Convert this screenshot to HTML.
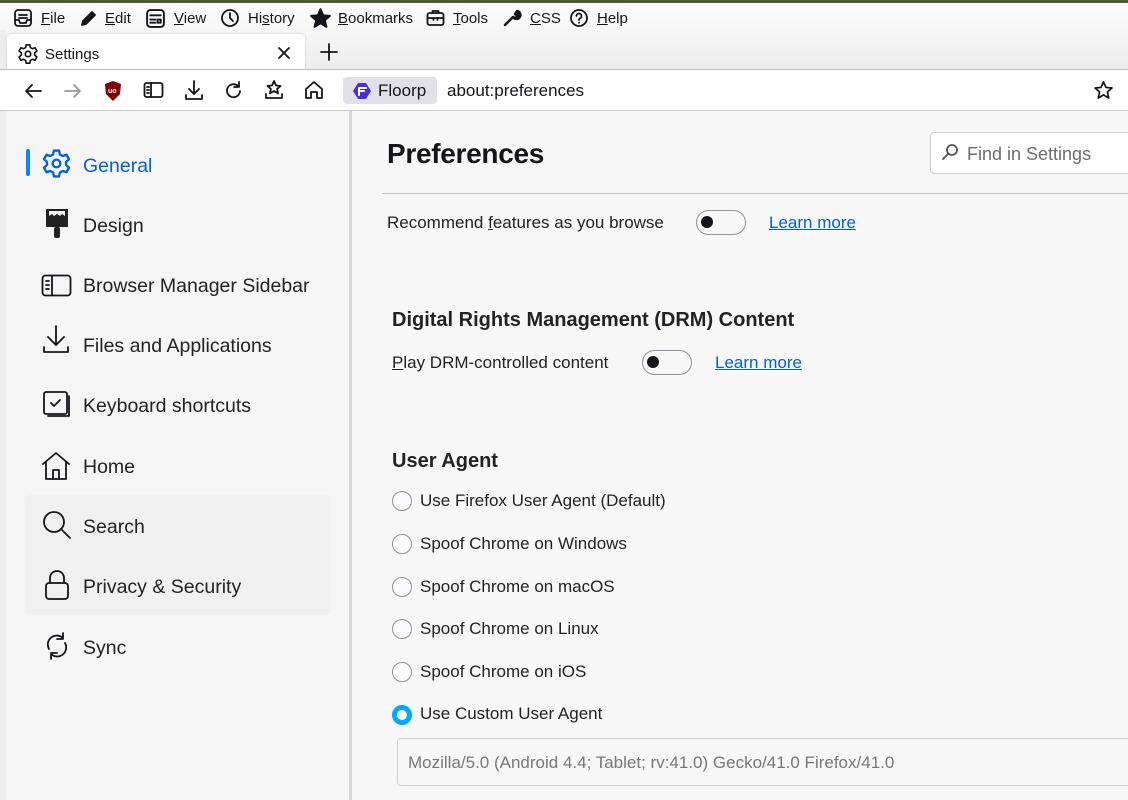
<!DOCTYPE html>
<html><head><meta charset="utf-8"><style>
*{box-sizing:border-box;margin:0;padding:0}
body{width:1128px;height:800px;overflow:hidden;font-family:"Liberation Sans",sans-serif;background:#f7f7f7;position:relative;color:#15141a}
.abs{position:absolute}
svg{position:absolute;fill:none;stroke:#15141a;stroke-width:1.8;stroke-linecap:round;stroke-linejoin:round}
.menu{font-size:15px;top:10px}
.side{position:absolute;left:83px;font-size:19.5px;color:#222}
.t{position:absolute;font-size:17px;color:#222}
.lm{color:#0060df;text-decoration:underline}
.tog{position:absolute;width:50px;height:25px;border:1.5px solid #8f8f9d;border-radius:13px;background:#f7f7f7}
.tog:after{content:"";position:absolute;left:4px;top:5px;width:12px;height:12px;border-radius:50%;background:#15141a}
.rad{position:absolute;left:392px;width:20px;height:20px;border:1.5px solid #8f8f9d;border-radius:50%;background:#fbfbfb}
.rt{position:absolute;left:420px;font-size:17px;color:#222}
</style></head><body>
<div class="abs" style="left:0;top:0;width:1128px;height:3px;background:#4a5a3a"></div>
<div class="abs" style="left:0;top:3px;width:1128px;height:66px;background:linear-gradient(#fdfdfd,#ededed)"></div>
<div class="abs" style="left:0;top:30px;width:6px;height:770px;background:#ededed"></div>
<!-- menu -->
<svg style="left:13px;top:8px" width="20" height="20" viewBox="0 0 20 20"><rect x="2" y="2" width="16" height="16" rx="3"/><path d="M6 7h8M6 10h8M2 12h4l1 3h6l1-3h4"/></svg>
<span class="abs menu" style="left:41px"><u>F</u>ile</span>
<svg style="left:79px;top:8px" width="20" height="20" viewBox="0 0 20 20"><path d="M3 17l1-4 9-9 3 3-9 9z" fill="#15141a"/></svg>
<span class="abs menu" style="left:105px"><u>E</u>dit</span>
<svg style="left:145px;top:8px" width="21" height="21" viewBox="0 0 20 20"><rect x="2" y="2" width="16" height="16" rx="3"/><path d="M5 7h10M5 11h5M5 14h5"/><rect x="12" y="11" width="3" height="3"/></svg>
<span class="abs menu" style="left:174px"><u>V</u>iew</span>
<svg style="left:220px;top:8px" width="20" height="20" viewBox="0 0 20 20"><circle cx="10" cy="10" r="8"/><path d="M10 5v5l3 3"/></svg>
<span class="abs menu" style="left:248px">Hi<u>s</u>tory</span>
<svg style="left:310px;top:8px" width="21" height="21" viewBox="0 0 20 20"><path d="M10 1l2.7 6 6.3.5-4.8 4.2 1.5 6.3L10 14.6 4.3 18l1.5-6.3L1 7.5 7.3 7z" fill="#15141a"/></svg>
<span class="abs menu" style="left:338px"><u>B</u>ookmarks</span>
<svg style="left:425px;top:8px" width="21" height="20" viewBox="0 0 20 20"><rect x="2" y="5" width="16" height="12" rx="2"/><path d="M7 5V3h6v2M2 10h16M8 10v2M12 10v2"/></svg>
<span class="abs menu" style="left:453px"><u>T</u>ools</span>
<svg style="left:502px;top:8px" width="20" height="20" viewBox="0 0 20 20"><path d="M3 17l8-8M11 9a4 4 0 1 0 4-6l-2 3 1 1 3-2a4 4 0 0 1-6 4" stroke-width="2.4"/></svg>
<span class="abs menu" style="left:530px"><u>C</u>SS</span>
<svg style="left:569px;top:8px" width="20" height="20" viewBox="0 0 20 20"><circle cx="10" cy="10" r="8"/><path d="M7.5 8a2.5 2.5 0 1 1 3.5 2.3c-.8.4-1 1-1 1.7M10 14.5v.3"/></svg>
<span class="abs menu" style="left:597px"><u>H</u>elp</span>
<!-- tab -->
<div class="abs" style="left:7px;top:34px;width:298px;height:40px;background:#fff;border-radius:4px 4px 0 0;box-shadow:0 0 2px rgba(0,0,0,.2)"></div>
<svg style="left:17px;top:43px" width="22" height="22" viewBox="0 0 24 24" stroke-width="1.6"><circle cx="12" cy="12" r="3"/><path d="M10 2h4l.6 3 2.2 1.2 2.9-1 2 3.5-2.3 2v2.6l2.3 2-2 3.5-2.9-1L14.6 19 14 22h-4l-.6-3-2.2-1.2-2.9 1-2-3.5 2.3-2v-2.6l-2.3-2 2-3.5 2.9 1L9.4 5z"/></svg>
<span class="abs" style="left:45px;top:46px;font-size:15px">Settings</span>
<svg style="left:277px;top:46px" width="14" height="14" viewBox="0 0 14 14"><path d="M2 2l10 10M12 2L2 12"/></svg>
<svg style="left:320px;top:43px" width="18" height="18" viewBox="0 0 18 18"><path d="M9 1v16M1 9h16"/></svg>
<!-- nav -->
<div class="abs" style="left:0;top:69px;width:1128px;height:42px;background:#fff;border-top:1px solid #bbb;border-bottom:1px solid #ccc"></div>
<svg style="left:23px;top:81px" width="20" height="20" viewBox="0 0 20 20"><path d="M18 10H3M9 4l-6 6 6 6"/></svg>
<svg style="left:63px;top:81px;stroke:#999" width="20" height="20" viewBox="0 0 20 20"><path d="M2 10h15M11 4l6 6-6 6"/></svg>
<svg style="left:103px;top:80px;stroke:none" width="20" height="22" viewBox="0 0 20 22"><path d="M10 1l8 3-1 10-7 7-7-7-1-10z" fill="#800000"/><text x="5" y="13" font-size="7" fill="#fff" font-family="Liberation Sans" font-weight="bold">uo</text></svg>
<svg style="left:143px;top:81px" width="21" height="19" viewBox="0 0 21 19"><rect x="1.5" y="2" width="18" height="14" rx="2"/><path d="M8 2v14M4 6h2M4 9h2M4 12h2"/></svg>
<svg style="left:184px;top:79px" width="20" height="22" viewBox="0 0 20 22"><path d="M10 2v13M5 10l5 5 5-5M2 16v4h16v-4"/></svg>
<svg style="left:224px;top:80px" width="20" height="21" viewBox="0 0 20 21"><path d="M16 11a6.5 6.5 0 1 1-2-5M15 2v5h-5"/></svg>
<svg style="left:263px;top:79px" width="22" height="22" viewBox="0 0 22 22"><path d="M11 2l2 4.5 4.5.4-3.4 3 1 4.5L11 12l-4.1 2.4 1-4.5-3.4-3 4.5-.4zM3 15v4h16v-4"/></svg>
<svg style="left:303px;top:79px" width="22" height="22" viewBox="0 0 22 22"><path d="M3 10l8-7 8 7v9h-5v-6h-6v6H3z"/></svg>
<div class="abs" style="left:343px;top:77px;width:94px;height:27px;background:#e0e0e6;border-radius:4px"></div>
<svg style="left:352px;top:81px;stroke:none" width="20" height="20" viewBox="0 0 20 20"><path d="M6 2h8l5 8-5 8H6l-5-8z" fill="#4b2fd6"/><path d="M7 7h7M7 10h5M7 7v7" stroke="#fff" stroke-width="2" fill="none"/></svg>
<span class="abs" style="left:378px;top:81px;font-size:17px">Floorp</span>
<span class="abs" style="left:447px;top:81px;font-size:17px">about:preferences</span>
<svg style="left:1093px;top:80px" width="21" height="21" viewBox="0 0 22 22"><path d="M11 2l2.6 5.8 6.2.6-4.7 4.2 1.4 6.2L11 15.6l-5.5 3.2 1.4-6.2-4.7-4.2 6.2-.6z"/></svg>
<!-- sidebar -->
<div class="abs" style="left:6px;top:111px;width:344px;height:689px;background:#f5f5f5"></div>
<div class="abs" style="left:349px;top:111px;width:3px;height:689px;background:#d8d8d8"></div>
<div class="abs" style="left:26px;top:495px;width:305px;height:120px;background:#f0f0f0;border-radius:4px"></div>
<div class="abs" style="left:26px;top:149px;width:4px;height:27px;background:#0a84ff;border-radius:2px"></div>
<svg style="left:41px;top:148px;stroke:#0060df" width="31" height="31" viewBox="0 0 24 24" stroke-width="1.5"><circle cx="12" cy="12" r="3"/><path d="M10 2h4l.6 3 2.2 1.2 2.9-1 2 3.5-2.3 2v2.6l2.3 2-2 3.5-2.9-1L14.6 19 14 22h-4l-.6-3-2.2-1.2-2.9 1-2-3.5 2.3-2v-2.6l-2.3-2 2-3.5 2.9 1L9.4 5z"/></svg>
<span class="side" style="top:155px;color:#0060df">General</span>
<svg style="left:44px;top:207px;stroke:none" width="26" height="32" viewBox="0 0 26 32"><path d="M2 2h22v18H2z" fill="#222"/><path d="M5 4h16v5l-3-2-2 2-3-2-3 2-2-2-3 2z" fill="#f5f5f5"/><rect x="10" y="20" width="6" height="11" rx="2" fill="#222"/></svg>
<span class="side" style="top:215px">Design</span>
<svg style="left:41px;top:274px" width="31" height="24" viewBox="0 0 31 24" stroke-width="2"><rect x="1.5" y="1.5" width="28" height="20" rx="3"/><path d="M11 2v19M5 7h3M5 11h3M5 15h3"/></svg>
<span class="side" style="top:275px">Browser Manager Sidebar</span>
<svg style="left:42px;top:323px" width="28" height="32" viewBox="0 0 28 32" stroke-width="2"><path d="M14 3v19M6 14l8 8 8-8M2 24v5h24v-5"/></svg>
<span class="side" style="top:335px">Files and Applications</span>
<svg style="left:42px;top:390px" width="30" height="30" viewBox="0 0 30 30" stroke-width="2"><rect x="2" y="2" width="23" height="22" rx="2"/><path d="M27 6v20H6M9 13l3 3 6-6"/></svg>
<span class="side" style="top:395px">Keyboard shortcuts</span>
<svg style="left:41px;top:451px" width="30" height="30" viewBox="0 0 30 30" stroke-width="2"><path d="M2 13L15 2l13 11M5 11v17h20V11M12 28v-9h6v9"/></svg>
<span class="side" style="top:456px">Home</span>
<svg style="left:42px;top:510px" width="30" height="30" viewBox="0 0 30 30" stroke-width="2"><circle cx="12" cy="12" r="10"/><path d="M19 19l9 9"/></svg>
<span class="side" style="top:516px">Search</span>
<svg style="left:44px;top:569px" width="26" height="32" viewBox="0 0 26 32" stroke-width="2"><rect x="2" y="14" width="22" height="16" rx="3"/><path d="M6 14V9a7 7 0 0 1 14 0v5"/></svg>
<span class="side" style="top:576px">Privacy &amp; Security</span>
<svg style="left:44px;top:631px" width="26" height="30" viewBox="0 0 26 30" stroke-width="2.4"><path d="M5 18a9 9 0 0 1 14-11M21 12a9 9 0 0 1-14 11M19 2v6h-6M7 28v-6h6"/></svg>
<span class="side" style="top:637px">Sync</span>
<!-- content -->
<span class="abs" style="left:387px;top:138px;font-size:28px;font-weight:bold;color:#15141a;letter-spacing:-.3px">Preferences</span>
<div class="abs" style="left:930px;top:132px;width:210px;height:42px;background:#fff;border:1px solid #cfcfd8;border-radius:4px"></div>
<svg style="left:941px;top:143px;stroke:#555" width="18" height="18" viewBox="0 0 18 18" stroke-width="1.4"><circle cx="11" cy="7" r="5"/><path d="M7.5 10.5L2 16"/></svg>
<span class="abs" style="left:967px;top:144px;font-size:18px;color:#6d6d6d">Find in Settings</span>
<div class="abs" style="left:382px;top:193px;width:746px;height:1px;background:#c4c4c4"></div>
<span class="t" style="left:387px;top:213px">Recommend <u>f</u>eatures as you browse</span>
<div class="tog" style="left:696px;top:210px"></div>
<span class="t lm" style="left:769px;top:213px">Learn more</span>
<span class="abs" style="left:392px;top:309px;font-size:20px;font-weight:bold;color:#222">Digital Rights Management (DRM) Content</span>
<span class="t" style="left:392px;top:353px"><u>P</u>lay DRM-controlled content</span>
<div class="tog" style="left:642px;top:350px"></div>
<span class="t lm" style="left:715px;top:353px">Learn more</span>
<span class="abs" style="left:392px;top:450px;font-size:20px;font-weight:bold;color:#222">User Agent</span>
<div class="rad" style="top:491px"></div><span class="rt" style="top:491px">Use Firefox User Agent (Default)</span>
<div class="rad" style="top:534px"></div><span class="rt" style="top:534px">Spoof Chrome on Windows</span>
<div class="rad" style="top:577px"></div><span class="rt" style="top:577px">Spoof Chrome on macOS</span>
<div class="rad" style="top:619px"></div><span class="rt" style="top:619px">Spoof Chrome on Linux</span>
<div class="rad" style="top:662px"></div><span class="rt" style="top:662px">Spoof Chrome on iOS</span>
<div class="rad" style="top:705px;border:5px solid #0af;background:#fff"></div><span class="rt" style="top:704px">Use Custom User Agent</span>
<div class="abs" style="left:397px;top:738px;width:740px;height:48px;background:#f7f7f7;border:1px solid #cfcfd8;border-radius:4px"></div>
<span class="abs" style="left:408px;top:753px;font-size:17px;color:#777">Mozilla/5.0 (Android 4.4; Tablet; rv:41.0) Gecko/41.0 Firefox/41.0</span>
</body></html>
